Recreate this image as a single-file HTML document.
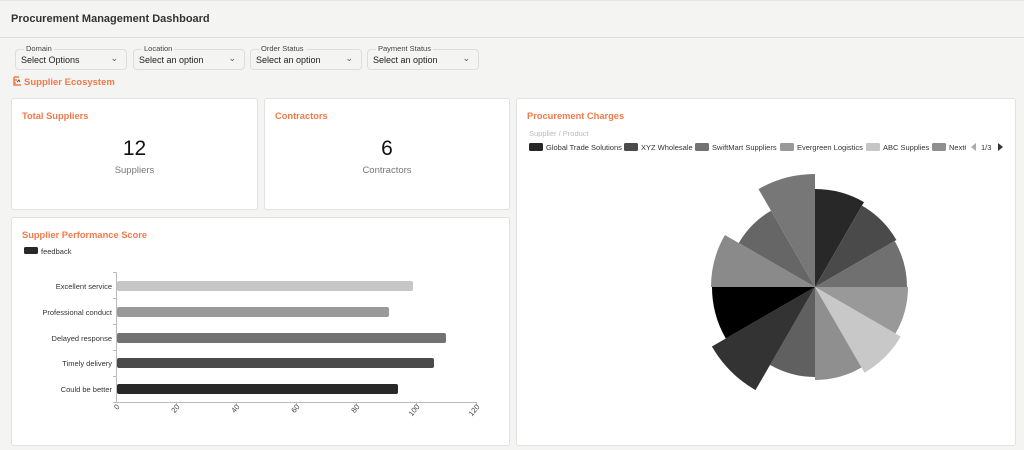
<!DOCTYPE html>
<html><head><meta charset="utf-8"><style>
*{box-sizing:border-box;margin:0;padding:0}
body{width:1024px;height:450px;background:#f4f4f2;font-family:"Liberation Sans",sans-serif;position:relative;overflow:hidden;color:#222}
.hdr{position:absolute;left:0;top:0;width:1024px;height:38px;border-bottom:1px solid #ddd;border-top:1px solid #e6e6e6}
.hdr h1{position:absolute;left:11px;top:12px;font-size:11px;font-weight:bold;color:#333}
.sel{position:absolute;top:49px;height:21px;width:112px;border:1px solid #ddd;border-radius:4px;background:#f4f4f2;font-size:9px;padding:5px 0 0 5px;color:#222}
.sel span{position:absolute;top:-6px;left:8px;font-size:7.5px;color:#444;background:#f4f4f2;padding:0 2px}
.sel i{position:absolute;right:8px;top:3px;font-style:normal;font-size:9px;color:#555}
.sec{position:absolute;left:13px;top:76px;font-size:9.5px;font-weight:bold;color:#f07a4a}
.card{position:absolute;background:#fff;border:1px solid #e2e2e2;border-radius:3px}
.ct{position:absolute;left:10px;top:12px;font-size:9.3px;font-weight:bold;color:#f07a4a}
.num{position:absolute;width:100%;text-align:center;top:38px;font-size:21px;color:#111}
.lbl{position:absolute;width:100%;text-align:center;top:66px;font-size:9.5px;color:#777}
</style></head><body>
<div class="hdr"><h1>Procurement Management Dashboard</h1></div>
<div class="sel" style="left:15px"><span>Domain</span>Select Options<i>⌄</i></div>
<div class="sel" style="left:133px"><span>Location</span>Select an option<i>⌄</i></div>
<div class="sel" style="left:250px"><span>Order Status</span>Select an option<i>⌄</i></div>
<div class="sel" style="left:367px"><span>Payment Status</span>Select an option<i>⌄</i></div>
<div class="sec"><svg width="9" height="10" style="vertical-align:-1px;margin-right:2px"><path d="M1 1v8h7M1 1h5M1 4h3M1 7h2" stroke="#f07a4a" stroke-width="1.5" fill="none"/><path d="M4 6l2-2 1 2" stroke="#555" fill="none"/></svg>Supplier Ecosystem</div>

<div class="card" style="left:11px;top:98px;width:247px;height:112px"><div class="ct">Total Suppliers</div><div class="num">12</div><div class="lbl">Suppliers</div></div>
<div class="card" style="left:264px;top:98px;width:246px;height:112px"><div class="ct">Contractors</div><div class="num">6</div><div class="lbl">Contractors</div></div>

<div class="card" style="left:11px;top:217px;width:499px;height:229px"><div class="ct">Supplier Performance Score</div></div>
<svg style="position:absolute;left:0;top:0" width="1024" height="450" font-family="Liberation Sans, sans-serif">
<rect x="24" y="247" width="14" height="7" rx="1.5" fill="#282828"/>
<text x="41" y="254" font-size="7.5" fill="#333">feedback</text>
<g stroke="#bbb" stroke-width="1"><line x1="116.5" y1="272" x2="116.5" y2="402"/><line x1="116" y1="402.5" x2="476" y2="402.5"/>
<path d="M113 272.5h3M113 298.5h3M113 324.5h3M113 350.5h3M113 376.5h3M113 402.5h3M176.5 402v3M236.5 402v3M296.5 402v3M356.5 402v3M416.5 402v3M476.5 402v3"/></g>
<g font-size="7.5" fill="#333" text-anchor="end">
<text x="112" y="289">Excellent service</text><text x="112" y="315">Professional conduct</text><text x="112" y="341">Delayed response</text><text x="112" y="366">Timely delivery</text><text x="112" y="392">Could be better</text></g>
<rect x="117" y="281" width="296" height="10" rx="2" fill="#c6c6c6"/>
<rect x="117" y="307" width="272" height="10" rx="2" fill="#999"/>
<rect x="117" y="333" width="329" height="10" rx="2" fill="#727272"/>
<rect x="117" y="358" width="317" height="10" rx="2" fill="#4a4a4a"/>
<rect x="117" y="384" width="281" height="10" rx="2" fill="#282828"/>
<g font-size="7.5" fill="#444" text-anchor="end">
<text transform="translate(120,407) rotate(-50)">0</text><text transform="translate(180,407) rotate(-50)">20</text><text transform="translate(240,407) rotate(-50)">40</text><text transform="translate(300,407) rotate(-50)">60</text><text transform="translate(360,407) rotate(-50)">80</text><text transform="translate(420,407) rotate(-50)">100</text><text transform="translate(480,407) rotate(-50)">120</text></g>
</svg>

<div class="card" style="left:516px;top:98px;width:500px;height:348px"><div class="ct">Procurement Charges</div>
<div style="position:absolute;left:12px;top:30px;font-size:7.5px;color:#bbb">Supplier / Product</div></div>
<svg style="position:absolute;left:0;top:0" width="1024" height="450" font-family="Liberation Sans, sans-serif">
<g font-size="7.5" fill="#333">
<rect x="529" y="143" width="14" height="8" rx="1.5" fill="#282828"/><text x="546" y="150">Global Trade Solutions</text>
<rect x="624" y="143" width="14" height="8" rx="1.5" fill="#4a4a4a"/><text x="641" y="150">XYZ Wholesale</text>
<rect x="695" y="143" width="14" height="8" rx="1.5" fill="#727272"/><text x="712" y="150">SwiftMart Suppliers</text>
<rect x="780" y="143" width="14" height="8" rx="1.5" fill="#999"/><text x="797" y="150">Evergreen Logistics</text>
<rect x="866" y="143" width="14" height="8" rx="1.5" fill="#c6c6c6"/><text x="883" y="150">ABC Supplies</text>
<rect x="932" y="143" width="14" height="8" rx="1.5" fill="#8f8f8f"/><text x="949" y="150">NextG</text>
<rect x="966" y="140" width="6" height="14" fill="#fff"/>
<path d="M976 143l-5 4 5 4z" fill="#aaa"/><text x="981" y="150">1/3</text><path d="M998 143l5 4-5 4z" fill="#333"/>
</g>
<path d="M815 287L815 189A98 98 0 0 1 864 202.1Z" fill="#282828"/>
<path d="M815 287L862 205.6A94 94 0 0 1 896.4 240Z" fill="#4a4a4a"/>
<path d="M815 287L894.7 241A92 92 0 0 1 907 287Z" fill="#707070"/>
<path d="M815 287L908 287A93 93 0 0 1 895.5 333.5Z" fill="#999"/>
<path d="M815 287L900.7 336.5A99 99 0 0 1 864.5 372.7Z" fill="#c8c8c8"/>
<path d="M815 287L861.5 367.5A93 93 0 0 1 815 380Z" fill="#8f8f8f"/>
<path d="M815 287L815 377A90 90 0 0 1 770 364.9Z" fill="#606060"/>
<path d="M815 287L755.5 390.1A119 119 0 0 1 711.9 346.5Z" fill="#333"/>
<path d="M815 287L725.8 338.5A103 103 0 0 1 712 287Z" fill="#000"/>
<path d="M815 287L711 287A104 104 0 0 1 724.9 235Z" fill="#8a8a8a"/>
<path d="M815 287L738.8 243A88 88 0 0 1 771 210.8Z" fill="#666"/>
<path d="M815 287L758.5 189.1A113 113 0 0 1 815 174Z" fill="#777"/>
</svg>
</body></html>
